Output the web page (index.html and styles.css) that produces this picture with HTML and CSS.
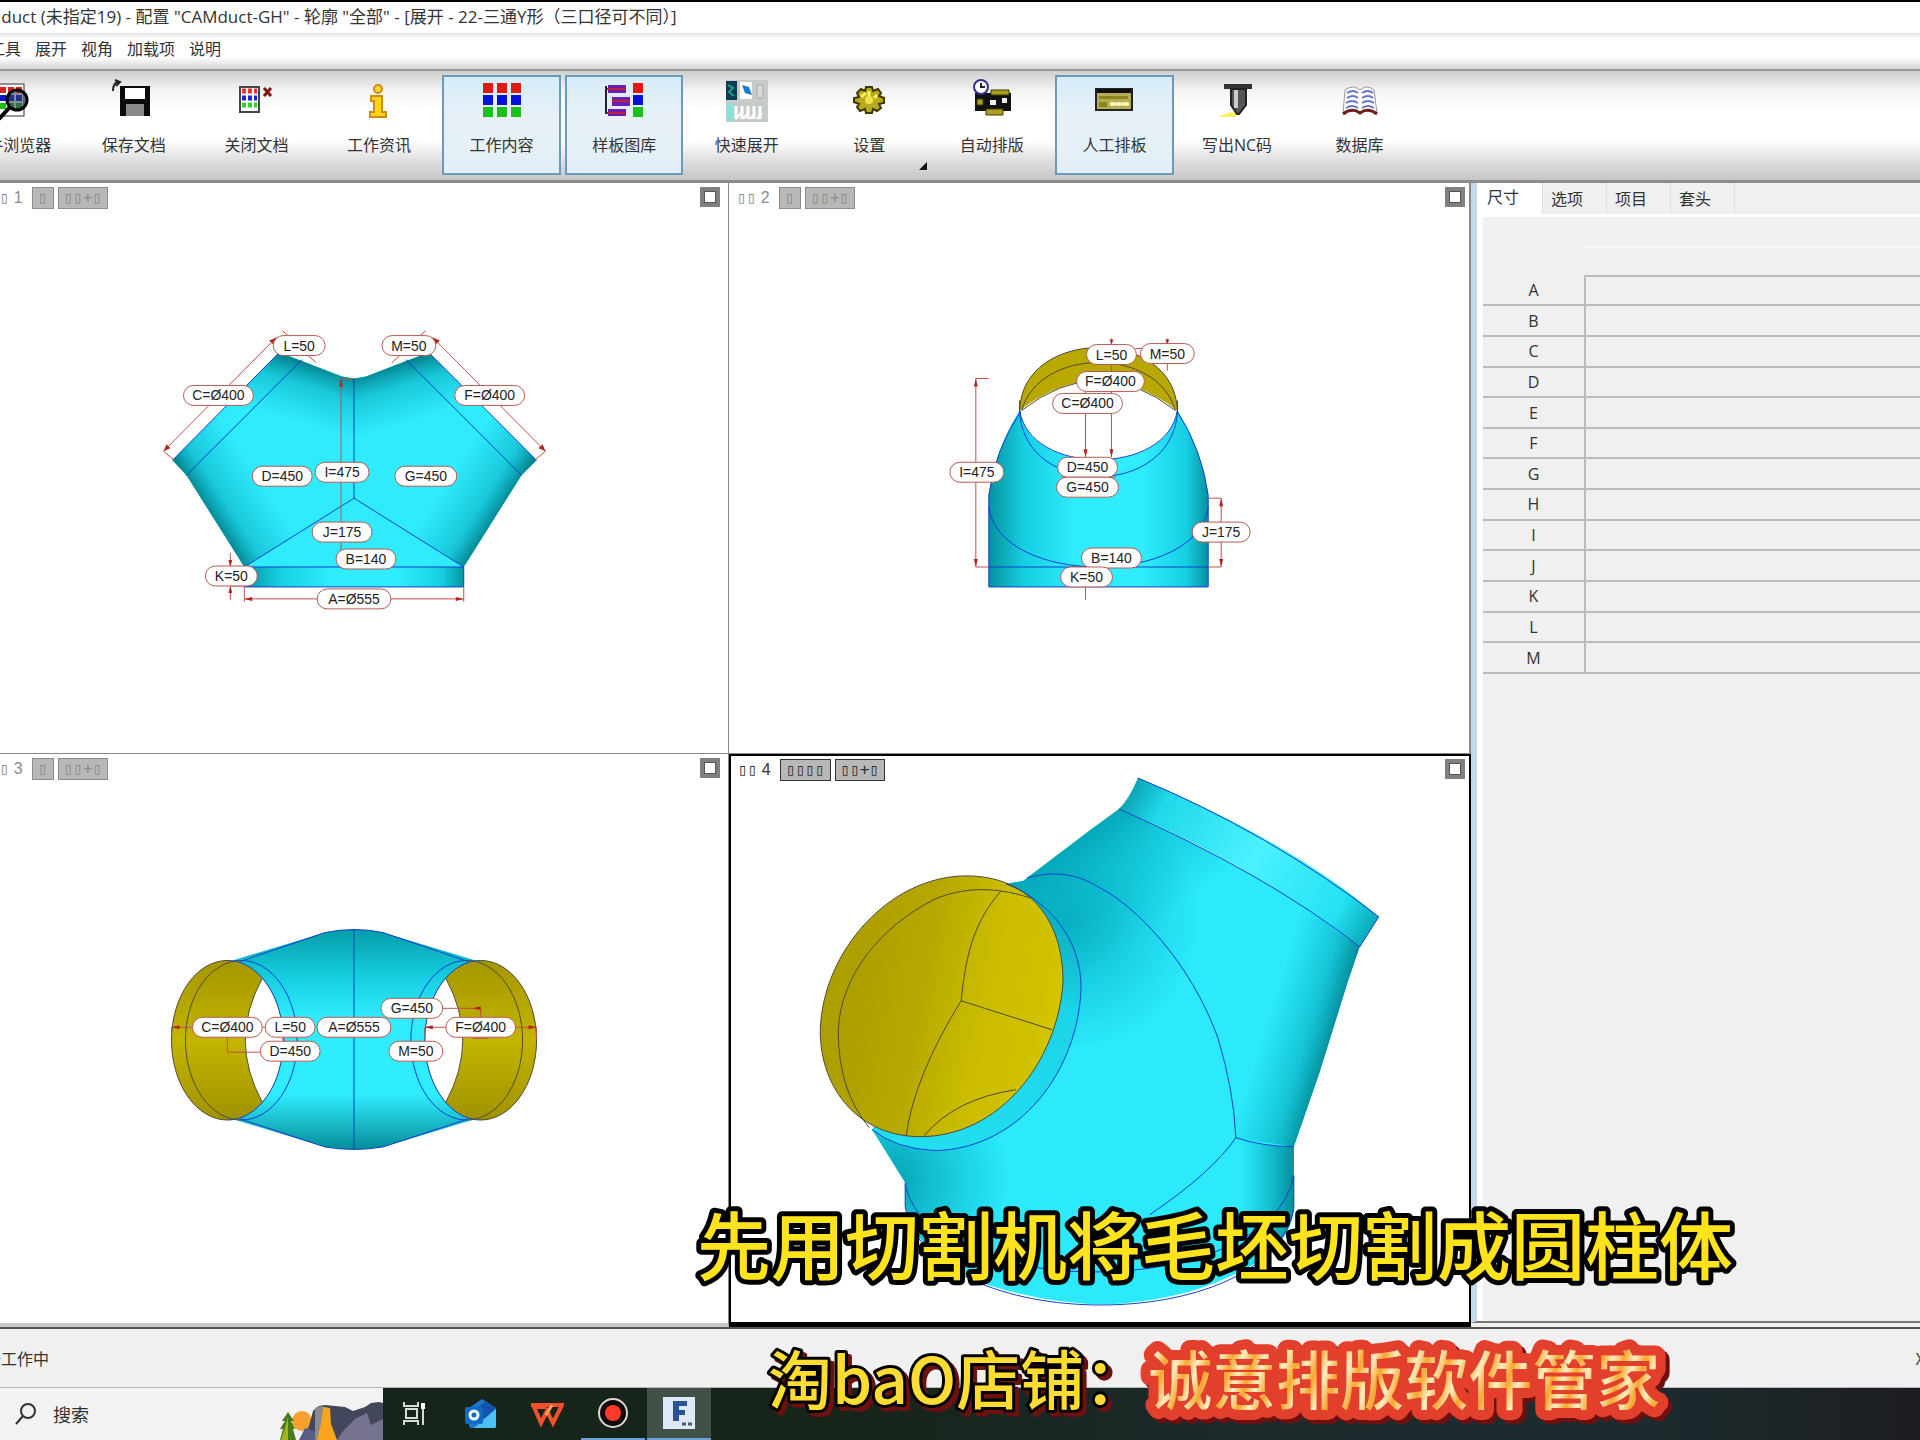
FILE: index.html
```html
<!DOCTYPE html>
<html lang="zh-CN">
<head>
    <meta charset="UTF-8">
    <meta name="viewport" content="width=device-width, initial-scale=1.0">
    <title>CAMduct</title>
    <link rel="stylesheet" href="styles.css">
</head>
<body>

<header class="title-bar">
    <span class="title-text">Mduct (未指定19) - 配置 "CAMduct-GH" - 轮廓 "全部" - [展开 - 22-三通Y形（三口径可不同）]</span>
</header>

<nav class="menu-bar">
    <a href="#">工具</a>
    <a href="#">展开</a>
    <a href="#">视角</a>
    <a href="#">加载项</a>
    <a href="#">说明</a>
</nav>

<div class="toolbar">
    <div class="tools">
        <button class="tool" type="button">
            <svg viewBox="0 0 40 40">
                <rect x="6" y="3" width="27" height="32" fill="#fff" stroke="#333"/>
                <path d="M9 9h6M17 9h6M25 9h6" stroke="#d22" stroke-width="6"/>
                <path d="M9 17h6M17 17h6M25 17h6" stroke="#11c" stroke-width="6"/>
                <path d="M9 25h6M17 25h6M25 25h6" stroke="#2b2" stroke-width="6"/>
                <circle cx="26" cy="19" r="10" fill="#345" fill-opacity=".6" stroke="#000" stroke-width="3"/>
                <path d="M19 26L8 38" stroke="#000" stroke-width="4"/>
            </svg>
            <span>文件浏览器</span>
        </button>
        <button class="tool" type="button">
            <svg viewBox="0 0 40 40">
                <path d="M6 5h30v30H6z" fill="#0a0a0a"/>
                <path d="M11 7h20v11H11z" fill="#fff"/>
                <path d="M12 23h18v12H12z" fill="#8a8a8a"/>
                <path d="M-1 10q0-8 5-9M1-1l5 2-4 4" fill="none" stroke="#222" stroke-width="2"/>
            </svg>
            <span>保存文档</span>
        </button>
        <button class="tool" type="button">
            <svg viewBox="0 0 40 40">
                <rect x="4" y="6" width="19" height="25" fill="#fff" stroke="#444" stroke-width="2"/>
                <path d="M6 10h4M12 10h4M18 10h3" stroke="#e33" stroke-width="5"/>
                <path d="M6 17h4M12 17h4M18 17h3" stroke="#22d" stroke-width="5"/>
                <path d="M6 24h4M12 24h4M18 24h3" stroke="#3c3" stroke-width="5"/>
                <path d="M28 7l7 8M35 7l-7 8" stroke="#801818" stroke-width="3"/>
            </svg>
            <span>关闭文档</span>
        </button>
        <button class="tool" type="button">
            <svg viewBox="0 0 40 40">
                <circle cx="19" cy="8" r="4" fill="#ffd83c" stroke="#d08c10" stroke-width="2"/>
                <path d="M12 15h11v16h4v5H11v-5h4V20h-3z" fill="#ffd21c" stroke="#d08c10" stroke-width="2"/>
            </svg>
            <span>工作资讯</span>
        </button>
        <button class="tool active" type="button">
            <svg viewBox="0 0 40 40">
                <path d="M1 7h10M15 7h10M29 7h10" stroke="#dc1c10" stroke-width="10"/>
                <path d="M1 19h10M15 19h10M29 19h10" stroke="#0a10dc" stroke-width="10"/>
                <path d="M1 31h10M15 31h10M29 31h10" stroke="#1cc01c" stroke-width="10"/>
            </svg>
            <span>工作内容</span>
        </button>
        <button class="tool active" type="button">
            <svg viewBox="0 0 40 40">
                <path d="M2 5v28M3 8h6M3 32h6" stroke="#223" stroke-width="2"/>
                <path d="M4 4h18v8H4zM8 16h18v9H8zM4 28h18v7H4z" fill="#6a1eb4"/>
                <path d="M3 8h18M8 20h17M3 32h18" stroke="#c0203c" stroke-width="2"/>
                <path d="M29 7h10" stroke="#dc1c10" stroke-width="10"/>
                <path d="M29 19h10" stroke="#0a10dc" stroke-width="10"/>
                <path d="M29 31h10" stroke="#1cc01c" stroke-width="10"/>
            </svg>
            <span>样板图库</span>
        </button>
        <button class="tool" type="button">
            <svg viewBox="0 0 40 40">
                <rect x="-1" y="-1" width="42" height="42" fill="#c6cac9"/>
                <rect x="-1" y="0" width="11" height="19" fill="#0e3c52"/>
                <path d="M1 4l5 3-4 4 5 4" fill="none" stroke="#23a08a" stroke-width="2"/>
                <rect x="13" y="1" width="12" height="17" fill="#fff"/>
                <path d="M15 4l7 2 3 8-7-2z" fill="#1678d8"/>
                <path d="M30 4h6v13h-6z" fill="#d6d6d6" stroke="#aaa"/>
                <rect x="0" y="22" width="6" height="18" fill="#8ce0dc"/>
                <path d="M9 25v13M15 25v13M21 25v13M27 25v13M33 25v13" stroke="#fff" stroke-width="3"/>
                <path d="M9 38l5-6M16 38l5-6M23 38l5-6M30 38l5-6" stroke="#fff" stroke-width="2"/>
            </svg>
            <span>快速展开</span>
        </button>
        <button class="tool has-menu" type="button">
            <svg viewBox="0 0 40 40">
                <path d="M17 6h6l1 4 5-2 3 4-2 3 5 2v5l-5 1 2 4-4 3-4-2-1 4h-6l-1-4-5 2-3-4 2-3-5-2v-4l5-1-2-4 4-4 4 2z" fill="#b8aa1c" stroke="#3c3800" stroke-width="2"/>
                <path d="M12 16l5-4M20 10v5M28 14l-3 3" stroke="#fff05a" stroke-width="3"/>
                <circle cx="20" cy="19" r="4" fill="#f0e44c"/>
            </svg>
            <span>设置</span>
        </button>
        <button class="tool" type="button">
            <svg viewBox="0 0 40 40">
                <path d="M3 12h36v18H3z" fill="#111"/>
                <path d="M19 9h18v5H19zM14 28h17v6H14zM5 18h6v6H5z" fill="#a8a020" stroke="#3c3a00"/>
                <path d="M18 19h6v5h-6zM30 17h5v5h-5z" fill="#eee"/>
                <circle cx="9" cy="6" r="7" fill="#fff" stroke="#30308c" stroke-width="2"/>
                <path d="M9 2v4h4" fill="none" stroke="#223" stroke-width="2"/>
            </svg>
            <span>自动排版</span>
        </button>
        <button class="tool active" type="button">
            <svg viewBox="0 0 40 40">
                <rect x="2" y="8" width="36" height="21" fill="#b4ac58" stroke="#222" stroke-width="2"/>
                <path d="M3 10h34" stroke="#111" stroke-width="4"/>
                <path d="M5 15h29v3H5zM5 21h8v5H5z" fill="#8c8418"/>
                <path d="M16 23h19M18 21v4M25 21v4M32 21v4" stroke="#fff8b4" stroke-width="3"/>
            </svg>
            <span>人工排板</span>
        </button>
        <button class="tool" type="button">
            <svg viewBox="0 0 40 40">
                <path d="M1 36l13-5 8 1-4 4z" fill="#f8f060"/>
                <path d="M7 3h28v5H7z" fill="#333"/>
                <path d="M14 8h15v16l-7 9h-2l-6-9z" fill="#555" stroke="#222" stroke-width="2"/>
                <path d="M19 9v18" stroke="#ccc" stroke-width="4"/>
            </svg>
            <span>写出NC码</span>
        </button>
        <button class="tool" type="button">
            <svg viewBox="0 0 40 40">
                <path d="M5 9q8-6 15 0 7-6 14 0l3 23q-9-6-17 0-8-6-17 0z" fill="#fff" stroke="#999"/>
                <path d="M7 12q6-4 11 0M7 17q6-4 11 0M6 22q6-4 12 0M6 27q6-4 12 0M22 12q6-4 11 0M22 17q6-4 11 0M22 22q6-4 12 0M22 27q6-4 12 0" fill="none" stroke="#6478c8" stroke-width="2"/>
                <path d="M3 33q9-7 17-1 8-6 17 1" fill="none" stroke="#6e1c1c" stroke-width="3"/>
            </svg>
            <span>数据库</span>
        </button>
    </div>
</div>

<main class="workspace">
    <section class="view view-1">
        <svg class="drawing" viewBox="0 182 728 571">
            <defs>
                <linearGradient id="notchLeft" gradientUnits="userSpaceOnUse" x1="325" y1="367" x2="308" y2="425">
                    <stop offset="0" stop-color="#03808c"/>
                    <stop offset=".4" stop-color="#03a8b8" stop-opacity=".5"/>
                    <stop offset="1" stop-color="#03a8b8" stop-opacity="0"/>
                </linearGradient>
                <linearGradient id="notchRight" gradientUnits="userSpaceOnUse" x1="383" y1="367" x2="400" y2="425">
                    <stop offset="0" stop-color="#03808c"/>
                    <stop offset=".4" stop-color="#03a8b8" stop-opacity=".5"/>
                    <stop offset="1" stop-color="#03a8b8" stop-opacity="0"/>
                </linearGradient>
                <linearGradient id="flankLeft" gradientUnits="userSpaceOnUse" x1="213" y1="522" x2="266" y2="488">
                    <stop offset="0" stop-color="#03808c"/>
                    <stop offset=".35" stop-color="#03a8b8" stop-opacity=".5"/>
                    <stop offset="1" stop-color="#03a8b8" stop-opacity="0"/>
                </linearGradient>
                <linearGradient id="flankRight" gradientUnits="userSpaceOnUse" x1="495" y1="522" x2="442" y2="488">
                    <stop offset="0" stop-color="#03808c"/>
                    <stop offset=".35" stop-color="#03a8b8" stop-opacity=".5"/>
                    <stop offset="1" stop-color="#03a8b8" stop-opacity="0"/>
                </linearGradient>
                <linearGradient id="drum" x1="0" x2="1" y1="0" y2="0">
                    <stop offset="0" stop-color="#07929e"/>
                    <stop offset=".16" stop-color="#16cfe2"/>
                    <stop offset=".4" stop-color="#30ecff"/>
                    <stop offset=".7" stop-color="#30ecff"/>
                    <stop offset=".9" stop-color="#16cfe2"/>
                    <stop offset="1" stop-color="#07929e"/>
                </linearGradient>
                <path id="armLeft" d="M172 460L279 352L303 361L342 376L354 378V498L244 567L186 475Z"/>
                <path id="armRight" d="M537 460L429 352L405 361L366 376L354 378V498L464 567L522 475Z"/>
            </defs>
            <use href="#armLeft" fill="#30ebfe"/>
            <use href="#armLeft" fill="url(#notchLeft)"/>
            <use href="#armLeft" fill="url(#flankLeft)"/>
            <use href="#armRight" fill="#30ebfe"/>
            <use href="#armRight" fill="url(#notchRight)"/>
            <use href="#armRight" fill="url(#flankRight)"/>
            <path d="M354 498L464 567H244Z" fill="#30ebfe"/>
            <path d="M244 567H464V587H244Z" fill="url(#drum)"/>
            <path class="edge" d="M172 460L279 352M186 475L302 359M537 460L429 352M522 475L406 359M354 378V498L244 567H464L354 498M244 567V587H464V567"/>
            <path class="dim" d="M174 460l-11-9L276 337l6 6M282 330l7 6M535 460l11-9L433 337l-6 6M426 330l-7 6M308 355l8 7M400 355l-8 7M341 550V378h13M244 587v15M464 587v15M244 599H464M230 553v14M230 600v-14h14"/>
            <path class="tip" d="M163 451l7-3-4-4zM276 337l-7 3 4 4zM546 451l-7-3 4-4zM433 337l7 3-4 4zM341 378l-2 8h4zM244 599l8-2v4zM464 599l-8-2v4zM230 567l-2-7h4zM230 586l-2 7h4z"/>
            <g class="tag">
                <rect x="273" y="335" width="52" height="20" rx="10"/><text x="299" y="350">L=50</text>
                <rect x="382" y="335" width="54" height="20" rx="10"/><text x="409" y="350">M=50</text>
                <rect x="183" y="385" width="70" height="20" rx="10"/><text x="218" y="400">C=Ø400</text>
                <rect x="455" y="385" width="70" height="20" rx="10"/><text x="490" y="400">F=Ø400</text>
                <rect x="252" y="466" width="60" height="20" rx="10"/><text x="282" y="481">D=450</text>
                <rect x="315" y="462" width="54" height="20" rx="10"/><text x="342" y="477">I=475</text>
                <rect x="395" y="466" width="62" height="20" rx="10"/><text x="426" y="481">G=450</text>
                <rect x="312" y="522" width="60" height="20" rx="10"/><text x="342" y="537">J=175</text>
                <rect x="336" y="549" width="60" height="20" rx="10"/><text x="366" y="564">B=140</text>
                <rect x="205" y="566" width="52" height="20" rx="10"/><text x="231" y="581">K=50</text>
                <rect x="317" y="589" width="74" height="20" rx="10"/><text x="354" y="604">A=Ø555</text>
            </g>
        </svg>
        <div class="view-head">
            <span class="view-name"><i>▯▯</i> 1</span>
            <button type="button">▯</button>
            <button type="button">▯▯+▯</button>
            <button class="maximize" type="button" aria-label="max"></button>
        </div>
    </section>

    <section class="view view-2">
        <svg class="drawing" viewBox="729 182 741 571">
            <path d="M1020 410C1022 326 1176 326 1178 410Q1099 350 1020 410Z" fill="#b8a800"/>
            <path d="M1020 410Q995 450 989 495V587H1209V495Q1203 450 1178 410C1170 476 1028 476 1020 410Z" fill="url(#drum)"/>
            <path class="edge" d="M1021 411Q995 450 989 495V587H1209V495Q1203 450 1178 411M989 567H1209M989 507C1000 587 1198 587 1209 507M1020 400C1012 502 1186 502 1178 400M1020 410C1030 476 1168 476 1178 410"/>
            <path class="edge-dark" d="M1020 410C1022 326 1176 326 1178 410M1022 410C1040 346 1158 346 1176 410M1022 410Q1099 350 1176 410"/>
            <path class="dim" d="M989 378h-13V567h13M1209 498h13V567h-13M1086 390V457M1112 338V457M1168 338v32M1136 348h10M1086 587v13M1062 477h54"/>
            <path class="tip" d="M976 378l-2 8h4zM976 567l-2-8h4zM1222 498l-2 8h4zM1222 567l-2-8h4zM1086 457l-2-8h4zM1112 457l-2-8h4zM1112 344l-2-5h4zM1168 344l-2-5h4z"/>
            <g class="tag">
                <rect x="1087" y="344" width="50" height="20" rx="10"/><text x="1112" y="359">L=50</text>
                <rect x="1141" y="343" width="54" height="20" rx="10"/><text x="1168" y="358">M=50</text>
                <rect x="1077" y="371" width="68" height="20" rx="10"/><text x="1111" y="386">F=Ø400</text>
                <rect x="1053" y="393" width="70" height="20" rx="10"/><text x="1088" y="408">C=Ø400</text>
                <rect x="1058" y="457" width="60" height="20" rx="10"/><text x="1088" y="472">D=450</text>
                <rect x="1057" y="477" width="62" height="20" rx="10"/><text x="1088" y="492">G=450</text>
                <rect x="1082" y="548" width="60" height="20" rx="10"/><text x="1112" y="563">B=140</text>
                <rect x="1061" y="567" width="52" height="20" rx="10"/><text x="1087" y="582">K=50</text>
                <rect x="950" y="462" width="54" height="20" rx="10"/><text x="977" y="477">I=475</text>
                <rect x="1193" y="522" width="58" height="20" rx="10"/><text x="1222" y="537">J=175</text>
            </g>
        </svg>
        <div class="view-head">
            <span class="view-name"><i>▯▯</i> 2</span>
            <button type="button">▯</button>
            <button type="button">▯▯+▯</button>
            <button class="maximize" type="button" aria-label="max"></button>
        </div>
    </section>

    <section class="view view-3">
        <svg class="drawing" viewBox="0 753 728 571">
            <defs>
                <linearGradient id="shell" x1="0" x2="0" y1="0" y2="1">
                    <stop offset="0" stop-color="#069ca8"/>
                    <stop offset=".2" stop-color="#14cbdc"/>
                    <stop offset=".4" stop-color="#30ecff"/>
                    <stop offset=".75" stop-color="#30ecff"/>
                    <stop offset="1" stop-color="#068c98"/>
                </linearGradient>
                <linearGradient id="brassV" x1="0" x2="0" y1="0" y2="1">
                    <stop offset="0" stop-color="#a49600"/>
                    <stop offset=".5" stop-color="#c4b400"/>
                    <stop offset="1" stop-color="#a09200"/>
                </linearGradient>
            </defs>
            <path d="M232 960L325 932Q354 926 383 932L476 960V1119L383 1147Q354 1152 325 1147L232 1119Z" fill="url(#shell)"/>
            <ellipse cx="227" cy="1040" rx="56" ry="80" fill="url(#brassV)"/>
            <ellipse cx="481" cy="1040" rx="56" ry="80" fill="url(#brassV)"/>
            <path d="M262 978Q228 1040 262 1102A56 80 0 0 0 262 978Z" fill="#fff"/>
            <path d="M446 978Q480 1040 446 1102A56 80 0 0 1 446 978Z" fill="#fff"/>
            <path class="edge" d="M240 961L325 932Q354 926 383 932L468 961M240 1119L325 1147Q354 1152 383 1147L468 1119M354 929V1149M227 960A56 80 0 0 1 227 1120M241 960A56 80 0 0 1 241 1120M481 960A56 80 0 0 0 481 1120M467 960A56 80 0 0 0 467 1120"/>
            <path class="edge-dark" d="M227 960A56 80 0 0 0 227 1120M241 960A56 80 0 0 0 241 1120M481 960A56 80 0 0 1 481 1120M467 960A56 80 0 0 1 467 1120M262 978Q228 1040 262 1102M446 978Q480 1040 446 1102"/>
            <path class="dim" d="M171 1036v-9H284v14M297 1027v14M227 1037v15h34M442 1008h39v10M425 1036v-9H537v12M473 1038h16"/>
            <path class="tip" d="M171 1027l8-2v4zM425 1027l8-2v4zM537 1027l-8-2v4zM473 1008l8-2v4z"/>
            <g class="tag">
                <rect x="192" y="1017" width="70" height="20" rx="10"/><text x="227" y="1032">C=Ø400</text>
                <rect x="265" y="1017" width="50" height="20" rx="10"/><text x="290" y="1032">L=50</text>
                <rect x="317" y="1017" width="74" height="20" rx="10"/><text x="354" y="1032">A=Ø555</text>
                <rect x="381" y="998" width="62" height="20" rx="10"/><text x="412" y="1013">G=450</text>
                <rect x="446" y="1017" width="70" height="20" rx="10"/><text x="481" y="1032">F=Ø400</text>
                <rect x="260" y="1041" width="60" height="20" rx="10"/><text x="290" y="1056">D=450</text>
                <rect x="389" y="1041" width="54" height="20" rx="10"/><text x="416" y="1056">M=50</text>
            </g>
        </svg>
        <div class="view-head">
            <span class="view-name"><i>▯▯</i> 3</span>
            <button type="button">▯</button>
            <button type="button">▯▯+▯</button>
            <button class="maximize" type="button" aria-label="max"></button>
        </div>
    </section>

    <section class="view view-4 current">
        <svg class="drawing" viewBox="731 755 738 567">
            <defs>
                <linearGradient id="shadeTop" gradientUnits="userSpaceOnUse" x1="1050" y1="855" x2="1125" y2="950">
                    <stop offset="0" stop-color="#03a0b0"/>
                    <stop offset=".4" stop-color="#03b0c2" stop-opacity=".55"/>
                    <stop offset="1" stop-color="#03b0c2" stop-opacity="0"/>
                </linearGradient>
                <linearGradient id="shadeRight" gradientUnits="userSpaceOnUse" x1="1330" y1="1055" x2="1262" y2="1034">
                    <stop offset="0" stop-color="#038490"/>
                    <stop offset=".4" stop-color="#03a8b8" stop-opacity=".55"/>
                    <stop offset="1" stop-color="#03b0c2" stop-opacity="0"/>
                </linearGradient>
                <radialGradient id="shadeMouth" gradientUnits="userSpaceOnUse" cx="1070" cy="920" r="130">
                    <stop offset="0" stop-color="#03a8ba" stop-opacity=".8"/>
                    <stop offset="1" stop-color="#03b0c2" stop-opacity="0"/>
                </radialGradient>
                <radialGradient id="shadeBase" gradientUnits="userSpaceOnUse" cx="890" cy="1180" r="120">
                    <stop offset="0" stop-color="#03a0b0"/>
                    <stop offset="1" stop-color="#03b0c2" stop-opacity="0"/>
                </radialGradient>
                <linearGradient id="shadeFoot" gradientUnits="userSpaceOnUse" x1="1294" y1="0" x2="1240" y2="0">
                    <stop offset="0" stop-color="#038c98"/>
                    <stop offset="1" stop-color="#03b0c2" stop-opacity="0"/>
                </linearGradient>
                <linearGradient id="neck3d" gradientUnits="userSpaceOnUse" x1="1125" y1="790" x2="1372" y2="935">
                    <stop offset="0" stop-color="#079eac"/>
                    <stop offset=".14" stop-color="#20d8ea"/>
                    <stop offset=".5" stop-color="#4af2ff"/>
                    <stop offset=".85" stop-color="#26e2f4"/>
                    <stop offset="1" stop-color="#06a6b4"/>
                </linearGradient>
                <linearGradient id="lip3d" gradientUnits="userSpaceOnUse" x1="1030" y1="890" x2="960" y2="1150">
                    <stop offset="0" stop-color="#06a8b8"/>
                    <stop offset=".4" stop-color="#1cd4e8"/>
                    <stop offset="1" stop-color="#22dcf0"/>
                </linearGradient>
                <linearGradient id="brass3d" gradientUnits="userSpaceOnUse" x1="850" y1="1000" x2="1060" y2="1040">
                    <stop offset="0" stop-color="#ae9f00"/>
                    <stop offset=".3" stop-color="#b6a700"/>
                    <stop offset=".6" stop-color="#cabb00"/>
                    <stop offset="1" stop-color="#d4c500"/>
                </linearGradient>
                <path id="bodyShape" d="M872 1129L905 1182V1206Q920 1262 990 1285Q1050 1304 1107 1304Q1180 1300 1230 1276Q1290 1250 1294 1208V1146L1320 1071L1348 981L1360 946Q1265 872 1119 808L1089 830L1023 880L1006 883L950 1000Z"/>
            </defs>
            <use href="#bodyShape" fill="#2ce9fc"/>
            <use href="#bodyShape" fill="url(#shadeTop)"/>
            <use href="#bodyShape" fill="url(#shadeMouth)"/>
            <use href="#bodyShape" fill="url(#shadeBase)"/>
            <path d="M1236 1137L1294 1146L1320 1071L1348 981L1360 946L1280 890L1200 1000Z" fill="url(#shadeRight)"/>
            <path d="M1236 1137Q1263 1146 1294 1146V1208Q1290 1250 1230 1276Z" fill="url(#shadeFoot)"/>
            <path d="M1138 777Q1128 800 1119 808Q1250 862 1360 946L1379 916Q1290 840 1138 777Z" fill="url(#neck3d)"/>
            <path d="M1006 883C1050 900 1082 940 1081 988C1078 1070 1020 1148 935 1150Q895 1148 872 1129L1000 1000Z" fill="url(#lip3d)"/>
            <path d="M966 875C1030 875 1063 920 1063 981C1058 1060 1000 1136 920 1136C860 1136 820 1090 820 1030C822 950 890 875 966 875Z" fill="url(#brass3d)"/>
            <path class="edge" d="M1138 777Q1270 832 1379 916L1360 946Q1265 872 1119 808M1027 877C1060 868 1082 876 1100 887C1135 905 1190 960 1218 1037Q1234 1090 1236 1137Q1263 1146 1294 1146M1236 1137Q1212 1172 1150 1214M1006 883C1050 900 1082 940 1081 988C1078 1070 1020 1148 935 1150Q895 1148 872 1129M905 1182V1206M1294 1175V1208M905 1184C930 1302 1270 1302 1294 1175M905 1206C930 1337 1270 1337 1294 1208"/>
            <path class="edge-dark" d="M966 875C1030 875 1063 920 1063 981C1058 1060 1000 1136 920 1136C860 1136 820 1090 820 1030C822 950 890 875 966 875ZM1030 897C990 884 960 888 935 898C880 926 840 975 838 1030Q838 1090 869 1127M1001 890C975 920 966 950 961 1000Q914 1076 906 1135M961 1000L1052 1029M924 1135Q955 1098 1016 1089"/>
        </svg>
        <div class="view-head">
            <span class="view-name"><i>▯▯</i> 4</span>
            <button type="button">▯▯▯▯</button>
            <button type="button">▯▯+▯</button>
            <button class="maximize" type="button" aria-label="max"></button>
        </div>
    </section>

    <aside class="panel">
        <div class="tabs">
            <button class="tab selected" type="button">尺寸</button>
            <button class="tab" type="button">选项</button>
            <button class="tab" type="button">项目</button>
            <button class="tab" type="button">套头</button>
        </div>
        <div class="panel-body">
            <table class="sizes">
                <thead>
                    <tr><td></td><th></th></tr>
                </thead>
                <tbody>
                    <tr><th>A</th><td></td></tr>
                    <tr><th>B</th><td></td></tr>
                    <tr><th>C</th><td></td></tr>
                    <tr><th>D</th><td></td></tr>
                    <tr><th>E</th><td></td></tr>
                    <tr><th>F</th><td></td></tr>
                    <tr><th>G</th><td></td></tr>
                    <tr><th>H</th><td></td></tr>
                    <tr><th>I</th><td></td></tr>
                    <tr><th>J</th><td></td></tr>
                    <tr><th>K</th><td></td></tr>
                    <tr><th>L</th><td></td></tr>
                    <tr><th>M</th><td></td></tr>
                </tbody>
            </table>
        </div>
    </aside>
</main>

<div class="status-bar">
    <span>于工作中</span>
    <span class="status-end">X</span>
</div>

<footer class="taskbar">
    <div class="search">
        <svg class="search-icon" viewBox="0 0 24 24">
            <circle cx="14" cy="9" r="7" fill="none" stroke="#333" stroke-width="2"/>
            <path d="M9 14L2 22" stroke="#333" stroke-width="2"/>
        </svg>
        <label class="search-label" for="search">搜索</label>
        <input id="search" type="text">
        <svg class="search-art" viewBox="0 0 104 51">
            <circle cx="23" cy="32" r="10" fill="#f9a12e"/>
            <path d="M34 22q4-6 12-6l20 2 8 4 12-4 6-4 8-1 4 1v37H22l8-14z" fill="#43475c"/>
            <path d="M64 42l12-12 12-6 4 12 12-6v21H58z" fill="#757390"/>
            <path d="M20 51l6-12 12 4 6 8z" fill="#5a5e86"/>
            <path d="M36 19l8-2-2 34h-6z" fill="#8a8c90"/>
            <path d="M44 18l7 1 1 16 6 16H38l4-16z" fill="#fba51c"/>
            <path d="M9 23l6 9-3 0 4 8-2 0 3 11H1l3-11-3 0 5-8-3 0z" fill="#4a7c1c"/>
            <path d="M9 28v23H2l4-12z" fill="#a8b41c"/>
        </svg>
    </div>
    <button class="task" type="button" aria-label="tasks">
        <svg viewBox="0 0 34 34">
            <path d="M6 5v4h14V5M6 28v-4h14v4M8 12h11v9H8zM25 12v16" fill="none" stroke="#d8dcd8" stroke-width="2"/>
            <path d="M23 6h4v6h-4z" fill="#fff"/>
        </svg>
    </button>
    <button class="task" type="button" aria-label="mail">
        <svg viewBox="0 0 34 34">
            <path d="M5 11L18 2l14 9v18q0 2-2 2H8q-3 0-3-3z" fill="#1a78d2"/>
            <path d="M12 12l10-8 10 7-14 12z" fill="#1454a8"/>
            <path d="M32 12v17q0 2-2 2H10z" fill="#4cc2f4"/>
            <rect x="1" y="10" width="18" height="17" rx="2" fill="#0f6cc4"/>
            <circle cx="10" cy="18" r="4" fill="none" stroke="#fff" stroke-width="3"/>
        </svg>
    </button>
    <button class="task" type="button" aria-label="writer">
        <svg viewBox="0 0 34 34">
            <path d="M1 8h31L23 26l-6-12-6 12-7-16h12" fill="none" stroke="#f4502c" stroke-width="4"/>
            <path d="M16 18l6-10" stroke="#ffa05a" stroke-width="3"/>
        </svg>
    </button>
    <button class="task open" type="button" aria-label="record">
        <svg viewBox="0 0 34 34">
            <circle cx="17" cy="17" r="14" fill="#140808" stroke="#d8d8d8" stroke-width="2"/>
            <circle cx="17" cy="17" r="8" fill="#ff3a2a"/>
        </svg>
    </button>
    <button class="task open focus" type="button" aria-label="fabrication">
        <svg viewBox="0 0 34 34">
            <rect x="1" y="1" width="32" height="32" fill="#dfe8f6"/>
            <path d="M11 5h14v5h-8v4h6v5h-6v6h-6z" fill="#2a5296"/>
            <path d="M20 28h4M26 28h4" stroke="#4c5870" stroke-width="3"/>
        </svg>
    </button>
</footer>

<svg class="captions">
    <defs>
        <linearGradient id="gold" gradientUnits="userSpaceOnUse" x1="0" y1="0" x2="10" y2="3" spreadMethod="reflect">
            <stop offset="0" stop-color="#fff0c4"/>
            <stop offset="1" stop-color="#f7a62c"/>
        </linearGradient>
    </defs>
    <text class="caption-main" x="36.3%" y="134">先用切割机将毛坯切割成圆柱体</text>
    <text class="caption-shop" x="40%" y="264">淘baO店铺：<tspan class="shop-name">诚意排版软件管家</tspan></text>
</svg>

</body>
</html>
```
FILE: styles.css
```css
* {
    box-sizing: border-box;
}
body {
    position: relative;
    display: flex;
    flex-direction: column;
    height: 100vh;
    margin: 0;
    overflow: hidden;
    background-color: #f0f0f0;
    color: #333;
    font-family: "Open Sans", "Noto Sans CJK SC", sans-serif;
    font-size: 16px;
}
button {
    margin: 0;
    padding: 0;
    border: none;
    background: none;
    color: inherit;
    font: inherit;
}

/* title and menu */
.title-bar {
    flex: none;
    height: 33px;
    border-top: 2px solid #000;
    background-color: #fff;
    font-size: 17px;
    line-height: 29px;
    white-space: nowrap;
}
.title-text {
    margin-left: -14px;
}
.menu-bar {
    flex: none;
    display: flex;
    gap: 14px;
    height: 38px;
    padding-left: 5px;
    border-bottom: 2px solid #999;
    background: linear-gradient(#e4e4e4, #fff 6px, #fff 24px, #d4d4d4);
    line-height: 32px;
}
.menu-bar a {
    color: inherit;
    text-decoration: none;
}
.menu-bar a:first-child {
    margin-left: -16px;
}

/* toolbar */
.toolbar {
    flex: none;
    height: 112px;
    padding-top: 4px;
    border-bottom: 3px solid #8c8c8c;
    background: linear-gradient(#cfcfcf, #f4f4f4 20px, #fff 40px, #fff 70px, #dedede 90px, #c6c6c6);
}
.tools {
    display: grid;
    grid-template-columns: repeat(12, 1fr);
    gap: 4px;
    width: 76.4%;
    margin-left: -48px;
}
.tool {
    position: relative;
    display: flex;
    flex-direction: column;
    align-items: center;
    gap: 14px;
    height: 100px;
    padding-top: 4px;
    border: 2px solid transparent;
    line-height: 20px;
    white-space: nowrap;
}
.tool svg {
    width: 40px;
    height: 40px;
    overflow: visible;
}
.tool.active {
    border-color: #6a9cba;
    background: linear-gradient(#d6ecfa, #e8f1f7 40px, #e2eef6);
}
.tool.has-menu::after {
    content: "";
    position: absolute;
    right: 0;
    bottom: 3px;
    border: 4px solid transparent;
    border-right-color: #111;
    border-bottom-color: #111;
}

/* four views and the side panel */
.workspace {
    flex: 1;
    display: grid;
    grid-template-columns: 729fr 742fr 449fr;
    grid-template-rows: 571fr 574fr;
    min-height: 0;
    border-bottom: 2px solid #555;
}
.view {
    display: grid;
    min-width: 0;
    min-height: 0;
    background-color: #fff;
    border-right: 1px solid #888;
    border-bottom: 1px solid #888;
}
.view-1, .view-3 {
    grid-column: 1;
}
.view-2, .view-4 {
    grid-column: 2;
}
.view-3, .view-4 {
    grid-row: 2;
}
.view-2 {
    border-right: 2px solid #888;
}
.view-3 {
    border-bottom: 4px solid #c8c8c8;
}
.view.current {
    border: 2px solid #000;
    border-bottom-width: 5px;
}
.view > * {
    grid-area: 1 / 1;
    min-width: 0;
    min-height: 0;
}
.drawing {
    width: 100%;
    height: 100%;
}
.edge, .edge-dark, .dim {
    fill: none;
    stroke-width: 1;
}
.edge {
    stroke: #1040d0;
}
.edge-dark {
    stroke: #4c4a38;
}
.dim {
    stroke: #c0504a;
}
.tip {
    fill: #b02820;
}
.tag rect {
    fill: #fff;
    stroke: #b85a52;
}
.tag text {
    fill: #222;
    font-family: "Liberation Sans", Arial, sans-serif;
    font-size: 14px;
    text-anchor: middle;
}
.view-head {
    align-self: start;
    display: flex;
    gap: 4px;
    padding: 4px 4px 4px 8px;
    color: #8c8c8c;
    font-family: "Liberation Sans", Arial, sans-serif;
    line-height: 22px;
}
.view-name {
    width: 38px;
    white-space: nowrap;
}
.view-name i, .view-head button {
    font-family: "DejaVu Sans Mono", monospace;
    font-style: normal;
}
.view-head button {
    height: 22px;
    padding: 0 5px;
    border: 1px solid #8c8c8c;
    background-color: #b8b8b8;
    line-height: 20px;
}
.view-head .maximize {
    width: 20px;
    height: 20px;
    margin-left: auto;
    border: 4px solid #808080;
    outline: 1px solid #555;
    outline-offset: -5px;
    background-color: #fff;
}
.view-1 .view-head, .view-3 .view-head {
    padding-right: 8px;
    padding-left: 0;
}
.view-1 .view-name, .view-3 .view-name {
    width: 28px;
    text-indent: -10px;
}
.current .view-head {
    padding: 3px 4px 4px 7px;
    color: #333;
}
.current .view-head button {
    border-color: #333;
}
.current .view-head .maximize {
    border-color: #808080;
}
.panel {
    grid-column: 3;
    grid-row: 1 / 3;
    display: flex;
    flex-direction: column;
    margin-bottom: 4px;
    padding-left: 6px;
    border-left: 6px solid #c6d8ee;
    border-bottom: 2px solid #777;
    background-color: #fff;
}
.tabs {
    display: flex;
    height: 34px;
    margin-left: -4px;
    background-color: #f0f0f0;
    border-bottom: 3px solid #fff;
}
.tab {
    width: 64px;
    padding-left: 8px;
    border-right: 1px solid #ddd;
    line-height: 28px;
    text-align: left;
}
.tab.selected {
    padding-bottom: 4px;
    background-color: #fff;
    line-height: 24px;
}
.panel-body {
    flex: 1;
    padding-top: 29px;
    background-color: #f0f0f0;
}
.sizes {
    width: 100%;
    height: 428px;
    border-collapse: collapse;
    table-layout: fixed;
}
.sizes th {
    width: 102px;
    padding: 0;
    border-right: 2px solid #bbb;
    font-weight: normal;
}
.sizes td {
    padding: 0;
}
.sizes thead td {
    width: 102px;
}
.sizes thead th {
    width: auto;
    height: 29px;
    border-top: 2px solid #f8f8f8;
    border-right: none;
    border-bottom: 2px solid #bbb;
}
.sizes tbody th, .sizes tbody td {
    border-bottom: 2px solid #bbb;
}

/* status bar and taskbar */
.status-bar {
    flex: none;
    display: flex;
    justify-content: space-between;
    height: 59px;
    line-height: 60px;
    border-bottom: 1px solid #bbb;
}
.status-bar span {
    margin-left: -15px;
}
.status-bar .status-end {
    margin-right: -5px;
}
.taskbar {
    flex: none;
    display: flex;
    gap: 2px;
    height: 52px;
    background: linear-gradient(90deg, #16241a 45%, #1c2a2c 65%, #1c2c2e 85%, #1c1d22);
}
.search {
    display: flex;
    align-items: center;
    width: 383px;
    margin-right: -2px;
    padding-left: 14px;
    background-color: #f2f2f2;
    font-size: 18px;
}
.search-icon {
    width: 24px;
    height: 24px;
}
.search-label {
    margin-left: 15px;
}
.search input {
    flex: 1;
    min-width: 0;
    border: none;
    background: none;
}
.search-art {
    align-self: end;
    width: 104px;
    height: 51px;
}
.task {
    display: flex;
    align-items: center;
    justify-content: center;
    width: 64px;
}
.task svg {
    width: 34px;
    height: 34px;
}
.task.open {
    border-bottom: 2px solid #6aa0d8;
}
.task.focus {
    background-color: #435048;
}

/* captions over the window */
.captions {
    position: absolute;
    left: 0;
    bottom: 0;
    width: 100%;
    height: 300px;
    pointer-events: none;
}
.captions text {
    font-family: "Noto Sans CJK SC", sans-serif;
    font-weight: 500;
    paint-order: stroke;
    stroke: #000;
    stroke-linejoin: round;
}
.caption-main {
    fill: #ffe31c;
    font-size: 74px;
    stroke-width: 10px;
}
.caption-shop {
    fill: #ffdc32;
    font-size: 64px;
    stroke-width: 6px;
    filter: drop-shadow(4px 4px 0 #6c1010);
}
.caption-shop .shop-name {
    fill: url(#gold);
    stroke: #e2402c;
    stroke-width: 20px;
}
```
